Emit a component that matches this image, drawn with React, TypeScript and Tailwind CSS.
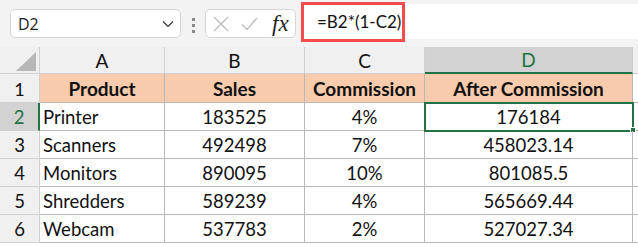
const cols = [
  { key: "A", w: "w-[125px]" },
  { key: "B", w: "w-[140px]" },
  { key: "C", w: "w-[120px]" },
  { key: "D", w: "w-[208px]" },
];

const rows = [
  ["Printer", "183525", "4%", "176184"],
  ["Scanners", "492498", "7%", "458023.14"],
  ["Monitors", "890095", "10%", "801085.5"],
  ["Shredders", "589239", "4%", "565669.44"],
  ["Webcam", "537783", "2%", "527027.34"],
];

const cellFont = { fontFamily: "Lato, 'Liberation Sans', sans-serif" };

function Toolbar() {
  return (
    <div className="flex h-[47px] items-start bg-[#f3f3f3] pl-[10px]" style={{ fontFamily: "'Open Sans', 'Noto Sans', sans-serif" }}>
      <div className="mt-[9px] flex h-[29px] w-[171px] items-center justify-between rounded-[5px] border border-[#d6d6d6] bg-white pl-[7px] pr-[6px] text-[16px] text-[#222]">
        <span>D2</span>
        <svg width="12" height="8" viewBox="0 0 12 8" fill="none" stroke="#333" strokeWidth="1.2">
          <path d="M1 1.5 L6 6.5 L11 1.5" />
        </svg>
      </div>
      <div className="ml-[11px] mt-[18px] flex flex-col gap-[3px]">
        <span className="h-[3px] w-[3px] bg-[#8a8a8a]" />
        <span className="h-[3px] w-[3px] bg-[#8a8a8a]" />
        <span className="h-[3px] w-[3px] bg-[#8a8a8a]" />
      </div>
      <div className="ml-[10px] mt-[9px] flex h-[29px] w-[91px] items-center rounded-[5px] border border-[#d6d6d6] bg-white pl-[7px]">
        <svg width="16" height="16" viewBox="0 0 16 16" stroke="#bdbdbd" strokeWidth="1.4" fill="none">
          <path d="M1 1 L15 15 M15 1 L1 15" />
        </svg>
        <svg className="ml-[12px]" width="17" height="14" viewBox="0 0 17 14" stroke="#bdbdbd" strokeWidth="1.4" fill="none">
          <path d="M1 7.5 L6 12.5 L16 1" />
        </svg>
        <span className="ml-[14px] text-[23px] italic leading-none text-[#222]" style={{ fontFamily: "'Liberation Serif', serif" }}>
          fx
        </span>
      </div>
      <div className="ml-[5px] mt-[4px] flex h-[35px] flex-1 items-center bg-white">
        <div className="flex h-[40px] w-[104px] items-center border-[3px] border-[#f24c4c] pl-[13px] text-[17px] text-[#111]" style={cellFont}>
          =B2*(1-C2)
        </div>
      </div>
    </div>
  );
}

function HeaderRow() {
  return (
    <div className="flex h-[27px] bg-[#f0f0f0]">
      <div className="relative w-[40px] shrink-0 border-r border-b border-[#d0d0d0]">
        <svg className="absolute bottom-[2px] right-[3px]" width="20" height="19" viewBox="0 0 20 19">
          <polygon points="0,19 20,19 20,0" fill="#b7b7b7" />
        </svg>
      </div>
      {cols.map((c) =>
        c.key === "D" ? (
          <div
            key={c.key}
            className={`${c.w} flex shrink-0 items-center justify-center border-r border-b-2 border-r-[#c8c8c8] border-b-[#217346] bg-[#d2d2d2] pt-[2px] text-[19px] text-[#217346]`}
            style={cellFont}
          >
            {c.key}
          </div>
        ) : (
          <div
            key={c.key}
            className={`${c.w} flex shrink-0 items-center justify-center border-r border-b border-[#d0d0d0] pt-[2px] text-[19px] text-[#111]`}
            style={cellFont}
          >
            {c.key}
          </div>
        )
      )}
      <div className="flex-1 border-b border-[#d0d0d0]" />
    </div>
  );
}

export default function App() {
  return (
    <div className="h-[247px] w-[638px] overflow-hidden bg-white">
      <Toolbar />
      <HeaderRow />

      {/* row 1: column titles */}
      <div className="flex h-[29px]" style={cellFont}>
        <div className="flex w-[40px] shrink-0 items-center justify-center border-r border-b border-[#d0d0d0] bg-[#f0f0f0] pt-[2px] text-[18px] text-[#111]">
          1
        </div>
        {["Product", "Sales", "Commission", "After Commission"].map((t, i) => (
          <div
            key={t}
            className={`${cols[i].w} flex shrink-0 items-center justify-center border-r border-b border-[#b8b8b8] bg-[#f8cbad] pt-[2px] text-[19px] font-bold text-[#111]`}
          >
            {t}
          </div>
        ))}
        <div className="flex-1 border-b border-[#b8b8b8]" />
      </div>

      {rows.map((r, ri) => {
        const n = ri + 2;
        const active = n === 2;
        return (
          <div key={n} className="flex h-[28px] text-[18.5px]" style={cellFont}>
            <div
              className={
                active
                  ? "flex w-[40px] shrink-0 items-center justify-center border-r-2 border-b border-r-[#217346] border-b-[#d0d0d0] bg-[#d2d2d2] pt-[2px] text-[#217346]"
                  : "flex w-[40px] shrink-0 items-center justify-center border-r border-b border-[#d0d0d0] bg-[#f0f0f0] pt-[2px] text-[#111]"
              }
            >
              {n}
            </div>
            <div className={`${cols[0].w} flex shrink-0 items-center border-r border-b border-[#b8b8b8] pl-[3px] pt-[2px] text-[#111]`}>
              {r[0]}
            </div>
            <div className={`${cols[1].w} flex shrink-0 items-center justify-center border-r border-b border-[#b8b8b8] pt-[2px] text-[#111]`}>
              {r[1]}
            </div>
            <div className={`${cols[2].w} flex shrink-0 items-center justify-center border-r border-b border-[#b8b8b8] pt-[2px] text-[#111]`}>
              {r[2]}
            </div>
            <div className={`${cols[3].w} relative flex shrink-0 items-center justify-center border-r border-b border-[#b8b8b8] pt-[2px] text-[#111]`}>
              {r[3]}
              {active && (
                <>
                  <div className="absolute -left-px -top-px h-[30px] w-[210px] border-2 border-[#217346]" />
                  <div className="absolute -bottom-[3px] -right-[4px] h-[6px] w-[6px] border border-white bg-[#217346]" />
                </>
              )}
            </div>
            <div className="flex-1 border-b border-[#b8b8b8]" />
          </div>
        );
      })}
    </div>
  );
}
